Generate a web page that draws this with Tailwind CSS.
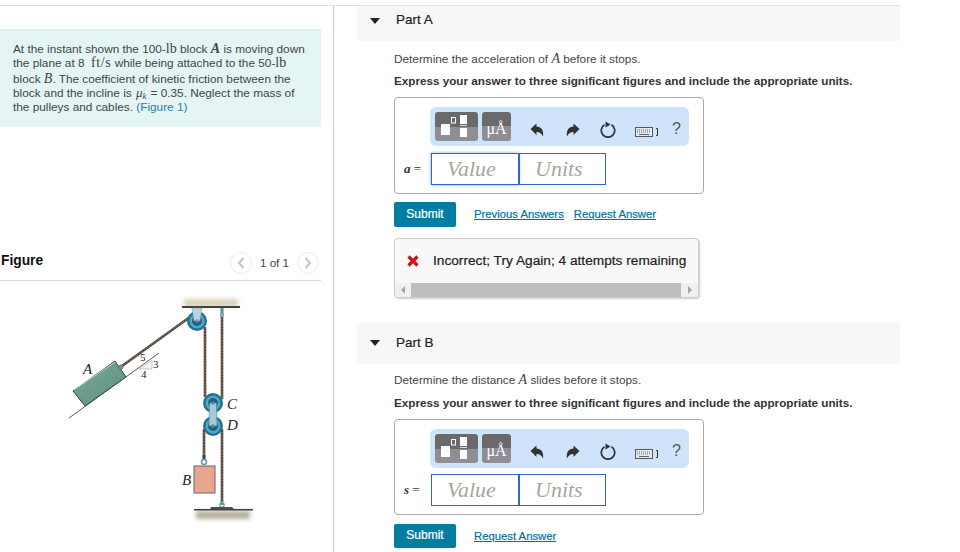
<!DOCTYPE html>
<html lang="en">
<head>
  <meta charset="UTF-8">
  <title>Part A / Part B</title>
  <script src="https://cdn.jsdelivr.net/npm/@tailwindcss/browser@4"></script>
</head>
<body class="bg-white font-['Liberation_Sans',Arial,sans-serif] text-[#333]">
<div class="w-[960px] h-[552px] overflow-hidden pt-[5px]">
  <div class="w-[900px] h-[547px] flex border-t border-[#e0e0e0]">

    <!-- left column -->
    <div class="w-[334px] shrink-0 border-r border-[#c5c9ce]">
      <div class="w-[321px] mt-[23px] bg-[#e5f5f6] border-t border-[#dfe6e8] pl-[13px] pt-[11px] h-[98px] text-[11.8px] leading-[15px] text-[#444]">
        <span class="block h-[14px]">At the instant shown the 100-<span class="font-['Liberation_Serif',serif] text-[14px]">lb</span> block <i class="font-['Liberation_Serif',serif] font-bold text-[14px]">A</i> is moving down</span>
        <span class="block h-[16px]">the plane at 8 &nbsp;<span class="font-['Liberation_Serif',serif] text-[14px] tracking-[0.6px]">ft/s</span> while being attached to the 50-<span class="font-['Liberation_Serif',serif] text-[14px]">lb</span></span>
        <span class="block h-[14px]">block <i class="font-['Liberation_Serif',serif] text-[14px]">B</i>. The coefficient of kinetic friction between the</span>
        <span class="block h-[15px]">block and the incline is <i class="font-['Liberation_Serif',serif] text-[13px] ml-[1px] mr-[4px]">μ<span class="text-[9px] align-[-2px]">k</span></i>= 0.35. Neglect the mass of</span>
        <span class="block h-[15px]">the pulleys and cables. <span class="text-[#2a7f9e]">(Figure 1)</span></span>
      </div>

      <div class="w-[321px] h-[37px] mt-[117px] flex border-b border-[#d9dde0]">
        <span class="pl-[1px] pt-[7px] text-[13.8px] leading-[20px] font-bold text-[#111]">Figure</span>
        <div class="ml-auto mr-[2px] flex items-center gap-[8px] pt-[3px] h-[34px] text-[11.6px] text-[#444]">
          <span class="w-[22px] h-[22px] rounded-full border border-[#ececec] flex items-center justify-center">
            <svg width="8" height="12" viewBox="0 0 8 12"><path d="M6.500 1 L2 6 L6.500 11" fill="none" stroke="#c4c4c4" stroke-width="2"/></svg>
          </span>
          <span>1 of 1</span>
          <span class="w-[22px] h-[22px] rounded-full border border-[#ececec] flex items-center justify-center">
            <svg width="8" height="12" viewBox="0 0 8 12"><path d="M1.500 1 L6 6 L1.500 11" fill="none" stroke="#c4c4c4" stroke-width="2"/></svg>
          </span>
        </div>
      </div>

      <!-- figure -->
      <svg class="ml-[50px] mt-[13px] block" width="210" height="230" viewBox="50 295 210 230">
        <defs>
          <filter id="soft" x="-5%" y="-5%" width="110%" height="110%"><feGaussianBlur stdDeviation="0.35"/></filter>
          <filter id="shade" x="-20%" y="-100%" width="140%" height="300%"><feGaussianBlur stdDeviation="2"/></filter>
          <linearGradient id="blockA" x1="0" y1="0" x2="1" y2="1"><stop offset="0" stop-color="#7aa899"/><stop offset="1" stop-color="#5a9080"/></linearGradient>
        </defs>
        <rect x="184" y="300" width="54" height="8" fill="#d8d2bc" filter="url(#shade)"/>
        <rect x="196" y="512" width="54" height="8" fill="#b5b09a" filter="url(#shade)"/>
        <g filter="url(#soft)">
          <!-- incline -->
          <path d="M69 419 L159 354" stroke="#333" stroke-width="0.800"/>
          <path d="M139 370 L152 361 L152 370 Z" fill="#f3f3ee" stroke="#999" stroke-width="0.500"/>
          <!-- ropes -->
          <g fill="none">
            <path d="M122 367 L190 318" stroke="#4f443c" stroke-width="2.600"/>
            <path d="M122 367 L190 318" stroke="#a89a88" stroke-width="0.800" stroke-dasharray="1.500 1.500"/>
            <path d="M205 328 L205 398 M222 314 L222 400 M204 430 L204 458 M222 430 L222 502" stroke="#4f443c" stroke-width="2.600"/>
            <path d="M205 328 L205 398 M222 314 L222 400 M204 430 L204 458 M222 430 L222 502" stroke="#a89a88" stroke-width="0.800" stroke-dasharray="1.500 1.500"/>
          </g>
          <!-- block A -->
          <path d="M73 392 L115 362 L126 378 L85 407 Z" fill="url(#blockA)" stroke="#35443f" stroke-width="1"/>
          <path d="M74 391 L115 363" stroke="#c6dcd4" stroke-width="1"/>
          <circle cx="121" cy="368" r="2.200" fill="#8e8a80" stroke="#555" stroke-width="0.500"/>
          <!-- ceiling -->
          <rect x="182" y="307" width="58" height="2" fill="#3d4246"/>
          <circle cx="197" cy="322" r="10" fill="#27708f"/>
          <circle cx="197" cy="322" r="7.500" fill="#4fa6c6"/>
          <circle cx="197" cy="322" r="5" fill="#1d6482"/>
          <path d="M192 309 L202 309 L200 322 L194 322 Z" fill="#b7d4df" stroke="#6b8b98" stroke-width="0.400"/>
          <circle cx="197" cy="322" r="1.800" fill="#8a8a8a"/>
          <path d="M222 309 L222 316" stroke="#6b8b98" stroke-width="3"/>
          <circle cx="222" cy="316" r="2" fill="#7fa8b8"/>
          <!-- pulleys C and D -->
          <circle cx="213" cy="404" r="10" fill="#27708f"/>
          <circle cx="213" cy="404" r="7.500" fill="#4fa6c6"/>
          <circle cx="213" cy="404" r="5" fill="#1d6482"/>
          <circle cx="213" cy="427" r="10" fill="#27708f"/>
          <circle cx="213" cy="427" r="7.500" fill="#4fa6c6"/>
          <circle cx="213" cy="427" r="5" fill="#1d6482"/>
          <path d="M209.500 404 L216.500 404 L217 427 L209 427 Z" fill="#a3cadb" stroke="#54798a" stroke-width="0.600"/>
          <circle cx="213" cy="404" r="1.800" fill="#6d7f88"/>
          <circle cx="213" cy="427" r="1.800" fill="#6d7f88"/>
          <!-- block B -->
          <path d="M204 456 L204 461" stroke="#3f3f3f" stroke-width="3"/>
          <circle cx="204" cy="463" r="2.500" fill="none" stroke="#6b98aa" stroke-width="1.500"/>
          <rect x="194" y="467" width="21" height="27" fill="#e8a690" stroke="#666" stroke-width="1"/>
          <!-- floor -->
          <path d="M222 502 L222 506" stroke="#6b8b98" stroke-width="3"/>
          <circle cx="222" cy="506" r="2.200" fill="none" stroke="#6b98aa" stroke-width="1.200"/>
          <path d="M210 511 L211 508 L232 508 L235 511 Z" fill="#4b4f52"/>
          <rect x="194" y="510" width="59" height="1.500" fill="#3d4246"/>
        </g>
        <g class="font-['Liberation_Serif',serif]" fill="#222">
          <text x="83" y="375" font-size="15" font-style="italic">A</text>
          <text x="227" y="410" font-size="15" font-style="italic">C</text>
          <text x="227" y="431" font-size="15" font-style="italic">D</text>
          <text x="182" y="486" font-size="15" font-style="italic">B</text>
          <text x="140" y="362" font-size="11">5</text>
          <text x="153" y="369" font-size="11">3</text>
          <text x="141" y="379" font-size="11">4</text>
        </g>
      </svg>
    </div>

    <!-- right column -->
    <div class="ml-[23px] flex-1">

      <!-- part A -->
      <div class="h-[35px] bg-[#f7f7f7] flex items-center pl-[13px] pb-[6px]">
        <span class="w-0 h-0 border-x-[5px] border-x-transparent border-t-[6px] border-t-[#222]"></span>
        <span class="ml-[16px] text-[13.5px] text-[#222] [-webkit-text-stroke:0.2px]">Part A</span>
      </div>
      <div class="pl-[37px]">
        <p class="mt-[10px] h-[15px] text-[11.8px] leading-[15px] text-[#444]">Determine the acceleration of <i class="font-['Liberation_Serif',serif] text-[14px]">A</i> before it stops.</p>
        <p class="mt-[7px] h-[15px] text-[11.7px] leading-[15px] font-bold text-[#333]">Express your answer to three significant figures and include the appropriate units.</p>

        <div class="mt-[9px] w-[310px] h-[97px] border border-[#aaa] rounded-[4px] pl-[35px] pt-[9px] relative">
          <div class="w-[259px] h-[39px] rounded-[6px] bg-[#cfe4fb] flex items-center pl-[5px] text-[#333]">
            <svg width="43" height="29" viewBox="0 0 43 29" class="rounded-[3px]">
              <rect width="43" height="15" fill="#6a6a6a"/><rect y="15" width="43" height="14" fill="#8e8e94"/>
              <rect x="6" y="12" width="9" height="11" fill="#fff"/>
              <rect x="16.500" y="5.500" width="4" height="5.500" fill="none" stroke="#fff"/>
              <rect x="25" y="3" width="7" height="9" fill="#fff"/>
              <rect x="25" y="13" width="7" height="1" fill="#ddd"/>
              <rect x="25" y="16" width="7" height="9" fill="#fff"/>
            </svg>
            <span class="ml-[4px] w-[29px] h-[29px] rounded-[3px] bg-[linear-gradient(#6a6a6a_50%,#8e8e94_50%)] text-white text-center font-['Liberation_Serif',serif] text-[16px] leading-[33px]">μÅ</span>
            <svg class="ml-[19px] mt-[6px]" width="14" height="14" viewBox="0 0 14 14"><path d="M0.500 6 L6.500 0.500 L6.500 3.500 C11 3.500 14 7 13 13.500 C11.500 10.500 10 9 6.500 9 L6.500 12 Z" fill="#333"/></svg>
            <svg class="ml-[22px] mt-[6px]" width="14" height="14" viewBox="0 0 14 14"><path d="M13.500 6 L7.500 0.500 L7.500 3.500 C3 3.500 0 7 1 13.500 C2.500 10.500 4 9 7.500 9 L7.500 12 Z" fill="#333"/></svg>
            <svg class="ml-[20px] mt-[6px]" width="16" height="17" viewBox="0 0 16 17"><path d="M4.500 3.800 A6.700 6.700 0 1 0 11.500 3.800" fill="none" stroke="#333" stroke-width="1.700"/><path d="M5.500 0.500 L10.500 3.500 L5.500 6.500 Z" fill="#333"/></svg>
            <svg class="ml-[19px] mt-[10px]" width="24" height="10" viewBox="0 0 24 10"><rect x="0.500" y="0.500" width="17" height="9" fill="#e3ecf3" stroke="#555"/><path d="M2 3 H16 M2 5 H16" stroke="#666" stroke-dasharray="1 1"/><path d="M4 7.500 H14" stroke="#666"/><path d="M21 1.500 H22.500 V8.500 H21" fill="none" stroke="#333"/></svg>
            <span class="ml-[13px] mt-[5px] text-[16px] text-[#555]">?</span>
          </div>
          <div class="mt-[7px] flex items-center">
            <span class="absolute left-[9px] font-['Liberation_Serif',serif] text-[13px] text-[#333]"><i class="font-bold">a</i> =</span>
            <span class="w-[88px] h-[32px] ml-[1px] border border-[#2f66c8] shadow-[0_0_3px_#7fa5e0] pl-[15px] font-['Liberation_Serif',serif] italic text-[22px] leading-[29px] text-[#a9a49c]">Value</span>
            <span class="w-[87px] h-[32px] border border-[#2f66c8] pl-[15px] font-['Liberation_Serif',serif] italic text-[22px] leading-[29px] text-[#a9a49c]">Units</span>
          </div>
        </div>

        <div class="mt-[8px] flex items-center">
          <span class="w-[62px] h-[25px] rounded-[2px] bg-[#007ea2] text-white text-[12px] leading-[24px] text-center [-webkit-text-stroke:0.2px]">Submit</span>
          <span class="ml-[18px] text-[11.3px] text-[#00739a] underline [-webkit-text-stroke:0.2px]">Previous Answers</span>
          <span class="ml-[10px] text-[11.3px] text-[#00739a] underline [-webkit-text-stroke:0.2px]">Request Answer</span>
        </div>

        <div class="mt-[11px] w-[305px] h-[60px] border border-[#ccc] rounded-[4px] bg-[#f8f8f8] shadow-[1px_1px_2px_#ccc] overflow-hidden">
          <div class="h-[44px] flex items-center pl-[12px]">
            <svg width="12" height="12" viewBox="0 0 12 12"><path d="M1.500 1.500 L10.500 10.500 M10.500 1.500 L1.500 10.500" stroke="#d3121c" stroke-width="3.200"/></svg>
            <span class="ml-[14px] text-[13.7px] text-[#222] [-webkit-text-stroke:0.2px]">Incorrect; Try Again; 4 attempts remaining</span>
          </div>
          <div class="h-[14px] bg-[#f0f0f0] flex items-center">
            <span class="w-0 h-0 ml-[6px] border-y-[4px] border-y-transparent border-r-[4px] border-r-[#a3a3a3]"></span>
            <span class="ml-[6px] w-[270px] h-[14px] bg-[#bdbdbd]"></span>
            <span class="w-0 h-0 ml-[7px] border-y-[4px] border-y-transparent border-l-[4px] border-l-[#a3a3a3]"></span>
          </div>
        </div>
      </div>

      <!-- part B -->
      <div class="mt-[25px] h-[41px] bg-[#f7f7f7] flex items-center pl-[13px] pb-[1px]">
        <span class="w-0 h-0 border-x-[5px] border-x-transparent border-t-[6px] border-t-[#222]"></span>
        <span class="ml-[16px] text-[13.5px] text-[#222] [-webkit-text-stroke:0.2px]">Part B</span>
      </div>
      <div class="pl-[37px]">
        <p class="mt-[8px] h-[15px] text-[11.8px] leading-[15px] text-[#444]">Determine the distance <i class="font-['Liberation_Serif',serif] text-[14px]">A</i> slides before it stops.</p>
        <p class="mt-[8px] h-[15px] text-[11.7px] leading-[15px] font-bold text-[#333]">Express your answer to three significant figures and include the appropriate units.</p>

        <div class="mt-[9px] w-[310px] h-[96px] border border-[#aaa] rounded-[4px] pl-[35px] pt-[9px] relative">
          <div class="w-[259px] h-[39px] rounded-[6px] bg-[#cfe4fb] flex items-center pl-[5px] text-[#333]">
            <svg width="43" height="29" viewBox="0 0 43 29" class="rounded-[3px]">
              <rect width="43" height="15" fill="#6a6a6a"/><rect y="15" width="43" height="14" fill="#8e8e94"/>
              <rect x="6" y="12" width="9" height="11" fill="#fff"/>
              <rect x="16.500" y="5.500" width="4" height="5.500" fill="none" stroke="#fff"/>
              <rect x="25" y="3" width="7" height="9" fill="#fff"/>
              <rect x="25" y="13" width="7" height="1" fill="#ddd"/>
              <rect x="25" y="16" width="7" height="9" fill="#fff"/>
            </svg>
            <span class="ml-[4px] w-[29px] h-[29px] rounded-[3px] bg-[linear-gradient(#6a6a6a_50%,#8e8e94_50%)] text-white text-center font-['Liberation_Serif',serif] text-[16px] leading-[33px]">μÅ</span>
            <svg class="ml-[19px] mt-[6px]" width="14" height="14" viewBox="0 0 14 14"><path d="M0.500 6 L6.500 0.500 L6.500 3.500 C11 3.500 14 7 13 13.500 C11.500 10.500 10 9 6.500 9 L6.500 12 Z" fill="#333"/></svg>
            <svg class="ml-[22px] mt-[6px]" width="14" height="14" viewBox="0 0 14 14"><path d="M13.500 6 L7.500 0.500 L7.500 3.500 C3 3.500 0 7 1 13.500 C2.500 10.500 4 9 7.500 9 L7.500 12 Z" fill="#333"/></svg>
            <svg class="ml-[20px] mt-[6px]" width="16" height="17" viewBox="0 0 16 17"><path d="M4.500 3.800 A6.700 6.700 0 1 0 11.500 3.800" fill="none" stroke="#333" stroke-width="1.700"/><path d="M5.500 0.500 L10.500 3.500 L5.500 6.500 Z" fill="#333"/></svg>
            <svg class="ml-[19px] mt-[10px]" width="24" height="10" viewBox="0 0 24 10"><rect x="0.500" y="0.500" width="17" height="9" fill="#e3ecf3" stroke="#555"/><path d="M2 3 H16 M2 5 H16" stroke="#666" stroke-dasharray="1 1"/><path d="M4 7.500 H14" stroke="#666"/><path d="M21 1.500 H22.500 V8.500 H21" fill="none" stroke="#333"/></svg>
            <span class="ml-[13px] mt-[5px] text-[16px] text-[#555]">?</span>
          </div>
          <div class="mt-[6px] flex items-center">
            <span class="absolute left-[9px] font-['Liberation_Serif',serif] text-[13px] text-[#333]"><i class="font-bold">s</i> =</span>
            <span class="w-[88px] h-[32px] ml-[1px] border border-[#2f66c8] pl-[15px] font-['Liberation_Serif',serif] italic text-[22px] leading-[29px] text-[#a9a49c]">Value</span>
            <span class="w-[87px] h-[32px] border border-[#2f66c8] pl-[15px] font-['Liberation_Serif',serif] italic text-[22px] leading-[29px] text-[#a9a49c]">Units</span>
          </div>
        </div>

        <div class="mt-[9px] flex items-center">
          <span class="w-[62px] h-[24px] rounded-[2px] bg-[#007ea2] text-white text-[12px] leading-[23px] text-center [-webkit-text-stroke:0.2px]">Submit</span>
          <span class="ml-[18px] text-[11.3px] text-[#00739a] underline [-webkit-text-stroke:0.2px]">Request Answer</span>
        </div>
      </div>
    </div>
  </div>
</div>
</body>
</html>
